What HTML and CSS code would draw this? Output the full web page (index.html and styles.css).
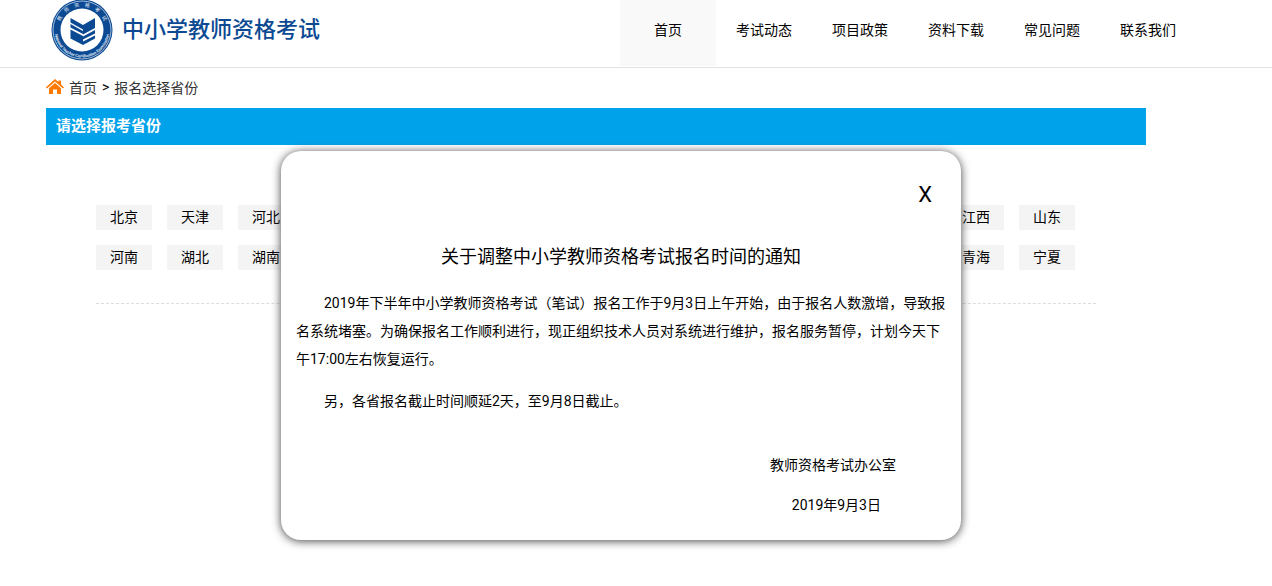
FILE: index.html
```html
<!DOCTYPE html>
<html lang="zh-CN">
<head>
    <meta charset="UTF-8">
    <meta name="viewport" content="width=device-width, initial-scale=1.0">
    <title>中小学教师资格考试</title>
    <link rel="stylesheet" href="styles.css">
</head>
<body>
    <header class="header">
        <div class="wrap header-inner">
            <a class="logo" href="#">
                <svg class="logo-mark" viewBox="0 0 62 62" aria-hidden="true">
                    <defs>
                        <path id="arc-top" d="M7.500 31a23.500 23.500 0 0 1 47 0"/>
                        <path id="arc-bottom" d="M3.500 31a27.500 27.500 0 0 0 55 0"/>
                    </defs>
                    <circle cx="31" cy="31" r="30.5" fill="#0b4a93"/>
                    <circle cx="31" cy="31" r="29" fill="none" stroke="#dfe9f4" stroke-width="0.7"/>
                    <circle cx="31" cy="31" r="21.5" fill="#fff"/>
                    <text class="ring-cn"><textPath href="#arc-top" startOffset="50%">教&#8195;师&#8195;资&#8195;格&#8195;考&#8195;试</textPath></text>
                    <text class="ring-en"><textPath href="#arc-bottom" startOffset="50%">National Teacher Certification Examination</textPath></text>
                    <g fill="#0b4a93">
                        <path d="M19.500 19L32 26v4.500L19.500 23.500z"/>
                        <path d="M19.500 25L32 32v3L19.500 28.500z"/>
                        <path d="M19.500 30.500L32 37v9L19.500 39.500z"/>
                        <path d="M44 19L32 26v9.500L44 29z"/>
                        <path d="M44 31L32 37.500v3L44 34.500z"/>
                        <path d="M44 36.500L32 42.500V46L44 39.500z"/>
                    </g>
                </svg>
                <span class="logo-text">中小学教师资格考试</span>
            </a>
            <nav class="nav">
                <a class="active" href="#">首页</a>
                <a href="#">考试动态</a>
                <a href="#">项目政策</a>
                <a href="#">资料下载</a>
                <a href="#">常见问题</a>
                <a href="#">联系我们</a>
            </nav>
        </div>
    </header>

    <main class="wrap main">
        <div class="crumbs">
            <svg class="home" viewBox="0 0 18 16" aria-hidden="true">
                <path fill="#ff7800" d="M9 0l3.500 3V1.500H15v4L18 8.300l-1 1.200L9 2.600 1 9.500 0 8.300z"/>
                <path fill="#ff7800" d="M9 4l6 5.200V15h-4v-4.500H7V15H3V9.200z"/>
            </svg>
            <a href="#">首页</a>
            <span class="sep">&gt;</span>
            <a href="#">报名选择省份</a>
        </div>
        <h2 class="bar">请选择报考省份</h2>
        <div class="provinces">
            <a href="#">北京</a>
            <a href="#">天津</a>
            <a href="#">河北</a>
            <a href="#">山西</a>
            <a href="#">内蒙古</a>
            <a href="#">辽宁</a>
            <a href="#">吉林</a>
            <a href="#">上海</a>
            <a href="#">江苏</a>
            <a href="#">浙江</a>
            <a href="#">安徽</a>
            <a href="#">福建</a>
            <a href="#">江西</a>
            <a href="#">山东</a>
            <a href="#">河南</a>
            <a href="#">湖北</a>
            <a href="#">湖南</a>
            <a href="#">广东</a>
            <a href="#">广西</a>
            <a href="#">海南</a>
            <a href="#">重庆</a>
            <a href="#">四川</a>
            <a href="#">贵州</a>
            <a href="#">云南</a>
            <a href="#">陕西</a>
            <a href="#">甘肃</a>
            <a href="#">青海</a>
            <a href="#">宁夏</a>
        </div>
    </main>

    <div class="notice" role="dialog" aria-labelledby="notice-title">
        <button class="close" type="button" aria-label="关闭">X</button>
        <h3 id="notice-title">关于调整中小学教师资格考试报名时间的通知</h3>
        <p>2019年下半年中小学教师资格考试（笔试）报名工作于9月3日上午开始，由于报名人数激增，导致报名系统堵塞。为确保报名工作顺利进行，现正组织技术人员对系统进行维护，报名服务暂停，计划今天下午17:00左右恢复运行。</p>
        <p>另，各省报名截止时间顺延2天，至9月8日截止。</p>
        <div class="sign">
            <span>教师资格考试办公室</span>
            <span>2019年9月3日</span>
        </div>
    </div>
</body>
</html>
```

FILE: styles.css
```css
body {
    margin: 0;
    font-family: Roboto, "Noto Sans CJK SC", sans-serif;
    font-size: 14px;
    color: #000;
    background-color: #fff;
}

a {
    color: inherit;
    text-decoration: none;
}

.wrap {
    max-width: 1180px;
    margin: 0 auto;
}

.header {
    border-bottom: 1px solid #e3e3e3;
}

.header-inner {
    display: flex;
    justify-content: space-between;
    height: 67px;
}

.logo {
    display: flex;
    gap: 9px;
    padding-left: 5px;
}

.logo-mark {
    width: 62px;
    height: 62px;
    margin-top: -1px;
}

.logo-text {
    font-size: 22px;
    font-weight: 500;
    line-height: 60px;
    color: #0b4a93;
}

.ring-cn,
.ring-en {
    fill: #e6eef7;
    text-anchor: middle;
}

.ring-cn {
    font-size: 5px;
}

.ring-en {
    font-size: 4px;
    font-weight: bold;
}

.nav {
    display: flex;
    margin-right: 30px;
}

.nav a {
    width: 96px;
    height: 66px;
    line-height: 60px;
    text-align: center;
}

.nav .active {
    background-color: #f9f9f9;
}

.main {
    box-sizing: border-box;
    padding-right: 80px;
}

.crumbs {
    display: flex;
    align-items: center;
    gap: 5px;
    height: 38px;
    padding-bottom: 2px;
    color: #333;
}

.sep {
    color: #000;
}

.home {
    width: 18px;
    height: 16px;
}

.bar {
    margin: 0;
    padding-left: 10px;
    font-size: 15px;
    line-height: 37px;
    color: #fff;
    background-color: #00a2ea;
}

.provinces {
    display: grid;
    grid-template-columns: repeat(auto-fill, 56px);
    gap: 15px;
    margin: 60px 50px 0;
    padding-bottom: 33px;
    border-bottom: 1px dashed #ddd;
}

.provinces a {
    line-height: 25px;
    text-align: center;
    background-color: #f4f4f4;
}

/* notice window over the page */
.notice {
    position: absolute;
    top: 151px;
    left: 50%;
    box-sizing: border-box;
    width: 680px;
    margin-left: -355px;
    padding: 28px 15px 21px;
    border-radius: 20px;
    background-color: #fff;
    box-shadow: 0 1px 10px #444;
}

.close {
    display: block;
    margin: 0 14px 0 auto;
    padding: 0;
    border: none;
    background: none;
    font-family: inherit;
    font-size: 22px;
    line-height: 32px;
    color: #000;
    cursor: pointer;
}

.notice h3 {
    margin: 32px 0 18px;
    font-size: 18px;
    font-weight: normal;
    line-height: 28px;
    text-align: center;
}

.notice p {
    margin: 0 0 14px;
    line-height: 28px;
    text-indent: 28px;
}

.sign {
    display: flex;
    flex-direction: column;
    align-items: flex-end;
    gap: 12px;
    padding: 22px 50px 0 0;
    line-height: 28px;
}

.sign span:last-child {
    padding-right: 15px;
}
```
